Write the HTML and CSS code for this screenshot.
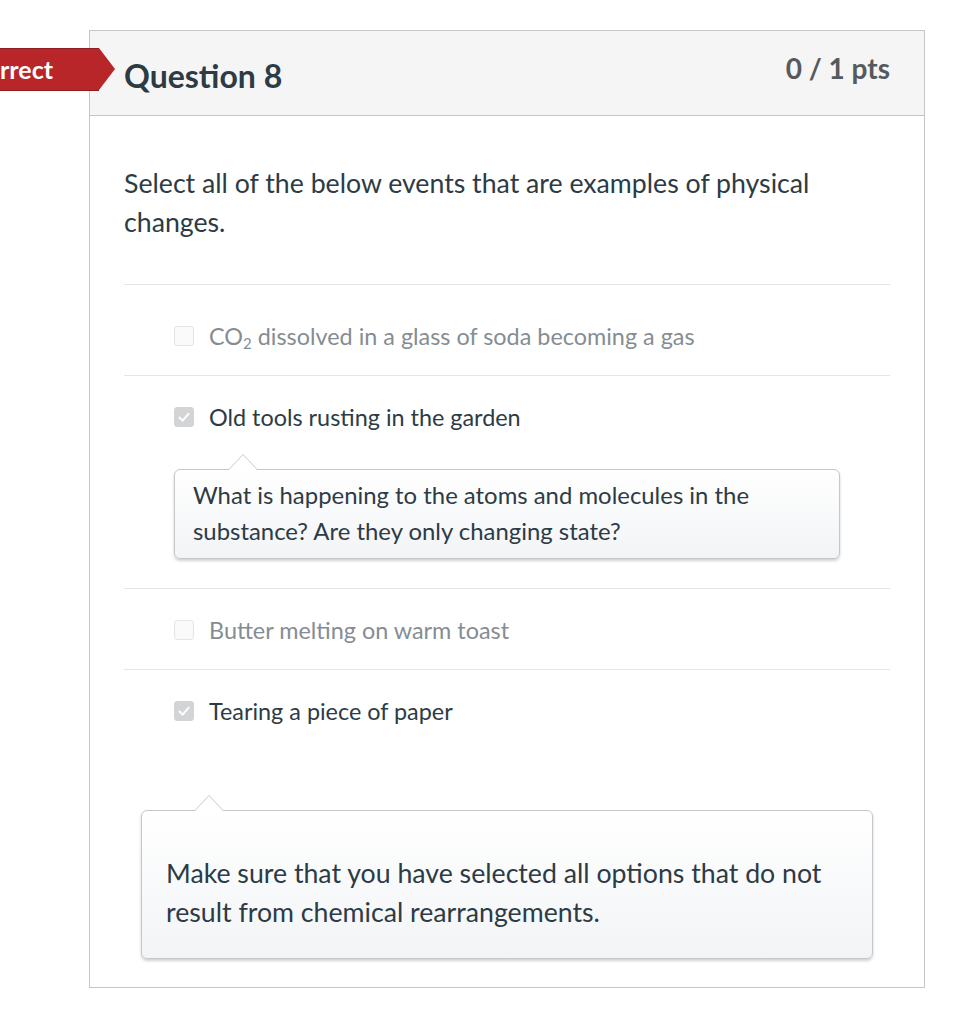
FILE: index.html
```html
<!DOCTYPE html>
<html>
<head>
<meta charset="utf-8">
<link rel="stylesheet" href="styles.css">
</head>
<body>
<div class="card">
  <div class="banner">Incorrect</div>
  <div class="header">
    <div class="title">Question 8</div>
    <div class="pts">0 / 1 pts</div>
  </div>
  <div class="body">
    <div class="question">Select all of the below events that are examples of physical changes.</div>
    <div class="answers">
      <div class="answer first">
        <div class="row muted"><span class="box"></span><span>CO<sub>2</sub> dissolved in a glass of soda becoming a gas</span></div>
      </div>
      <div class="answer">
        <div class="row"><span class="box checked"><svg viewBox="0 0 20 20" width="20" height="20"><path d="M5 10.5 L8.5 14 L15 6.5" fill="none" stroke="#fff" stroke-width="2.2" stroke-linecap="round" stroke-linejoin="round"/></svg></span><span>Old tools rusting in the garden</span></div>
        <div class="tip small">What is happening to the atoms and molecules in the substance? Are they only changing state?</div>
      </div>
      <div class="answer">
        <div class="row muted"><span class="box"></span><span>Butter melting on warm toast</span></div>
      </div>
      <div class="answer last">
        <div class="row"><span class="box checked"><svg viewBox="0 0 20 20" width="20" height="20"><path d="M5 10.5 L8.5 14 L15 6.5" fill="none" stroke="#fff" stroke-width="2.2" stroke-linecap="round" stroke-linejoin="round"/></svg></span><span>Tearing a piece of paper</span></div>
      </div>
    </div>
    <div class="tip big">Make sure that you have selected all options that do not result from chemical rearrangements.</div>
  </div>
</div>
</body>
</html>
```

FILE: styles.css
```css
html, body {
  margin: 0;
  padding: 0;
  background: #fff;
}
body {
  font-family: Lato, "Open Sans", sans-serif;
  color: #2d3b45;
  padding-top: 30px;
}
.card {
  position: relative;
  margin-left: 89px;
  width: 834px;
  border: 1px solid #c4c7ca;
}
.banner {
  position: absolute;
  left: -180px;
  top: 17px;
  height: 41px;
  width: 142px;
  padding-right: 46px;
  background: #b8262a;
  border: 1px solid #8c1d20;
  border-right: none;
  color: #fff;
  font-weight: 700;
  font-size: 25px;
  line-height: 40px;
  text-align: right;
  white-space: nowrap;
  box-sizing: content-box;
}
.banner::after {
  content: "";
  position: absolute;
  right: -16px;
  top: -1px;
  border-top: 21.5px solid transparent;
  border-bottom: 21.5px solid transparent;
  border-left: 16px solid #b8262a;
}
.header {
  display: flex;
  justify-content: space-between;
  align-items: flex-start;
  background: #f5f5f5;
  border-bottom: 1px solid #c4c7ca;
  padding: 0 34px;
  box-sizing: border-box;
  height: 85px;
}
.title {
  font-size: 32px;
  font-weight: 700;
  margin-top: 25px;
  line-height: 40px;
  color: #2d3b45;
}
.pts {
  font-size: 28px;
  font-weight: 700;
  color: #555a5e;
  margin-top: 19px;
  line-height: 36px;
}
.body {
  padding: 0 34px 28px 34px;
}
.question {
  font-size: 26.7px;
  line-height: 39px;
  margin-top: 48px;
  padding-bottom: 42px;
  border-bottom: 1px solid #e3e5e7;
}
.answer {
  border-bottom: 1px solid #e3e5e7;
  padding: 26px 50px 24px 50px;
}
.answer.first {
  padding-top: 36px;
}
.answer.last {
  border-bottom: none;
}
.row {
  display: flex;
  align-items: center;
  gap: 15px;
  font-size: 23.4px;
  line-height: 30px;
  color: #2d3b45;
}
.row.muted {
  color: #858d93;
}
.row sub {
  font-size: 15px;
  line-height: 0;
  vertical-align: -4px;
}
.box {
  width: 18px;
  height: 18px;
  border: 1px solid #e2e4e6;
  border-radius: 3px;
  background: #fafafa;
  flex: none;
  display: flex;
  align-items: center;
  justify-content: center;
}
.box.checked {
  background: #d2d4d6;
  border-color: #d2d4d6;
}
.box svg {
  width: 18px;
  height: 18px;
}
.tip {
  position: relative;
  border: 1px solid #c4c8cc;
  border-radius: 6px;
  background: linear-gradient(#ffffff, #f2f4f6);
  box-shadow: 0 2px 3px rgba(0, 0, 0, 0.18);
}
.tip::before, .tip::after {
  content: "";
  position: absolute;
  width: 0;
  height: 0;
  border-left: 15px solid transparent;
  border-right: 15px solid transparent;
}
.tip::before {
  top: -16px;
  border-bottom: 16px solid #c4c8cc;
}
.tip::after {
  top: -15px;
  border-bottom: 16px solid #ffffff;
}
.tip.small {
  margin-top: 37px;
  margin-bottom: 5px;
  width: 666px;
  box-sizing: border-box;
  padding: 7px 18px 9px 18px;
  font-size: 23.9px;
  line-height: 36px;
}
.tip.small::before, .tip.small::after {
  left: 53px;
}
.tip.big {
  margin: 60px 17px 0 17px;
  padding: 43px 24px 26px 24px;
  font-size: 26.7px;
  line-height: 39px;
}
.tip.big::before, .tip.big::after {
  left: 52px;
}
```
